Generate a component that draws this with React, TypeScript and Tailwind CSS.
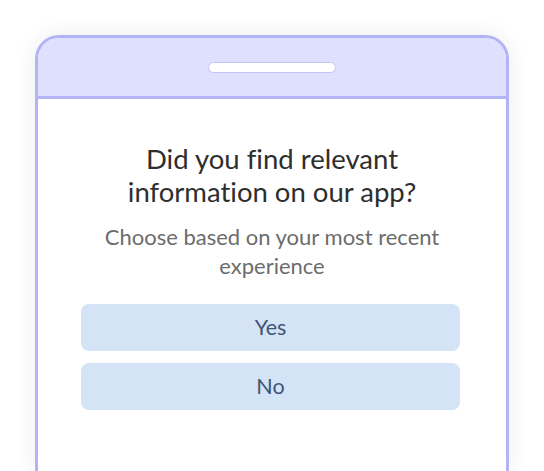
export default function App() {
  return (
    <div className="h-[471px] w-[544px] overflow-hidden bg-white pl-[35px] pt-[35px] font-['Lato','Noto_Sans',sans-serif] [font-variant-ligatures:none]">
      <div className="h-[436px] w-[474px] overflow-hidden rounded-t-[24px] border-[3px] border-b-0 border-[#b2b4f6] bg-white shadow-[0_0_22px_rgba(0,0,0,0.08)]">
        {/* top bar with speaker slot */}
        <div className="flex h-[61px] items-center justify-center border-b-[3px] border-[#b2b4f6] bg-[#dfdffe]">
          <div className="h-[11px] w-[128px] rounded-full border-[1.5px] border-[#c3c4f6] bg-white" />
        </div>

        <div className="flex flex-col items-center pt-[43px]">
          <h1 className="text-center text-[27.5px] leading-[33px] text-[#2e2e2e]">
            Did you find relevant
            <br />
            information on our app?
          </h1>
          <p className="mt-[14px] text-center text-[22px] leading-[29px] text-[#6c6c6c]">
            Choose based on your most recent
            <br />
            experience
          </p>

          <div className="mr-[3px] mt-[24px] flex w-[379px] flex-col gap-[12px]">
            <button className="h-[47px] rounded-[8px] bg-[#d4e3f6] text-[21.5px] text-[#3f5575]">Yes</button>
            <button className="h-[47px] rounded-[8px] bg-[#d4e3f6] text-[21.5px] text-[#3f5575]">No</button>
          </div>
        </div>
      </div>
    </div>
  );
}
